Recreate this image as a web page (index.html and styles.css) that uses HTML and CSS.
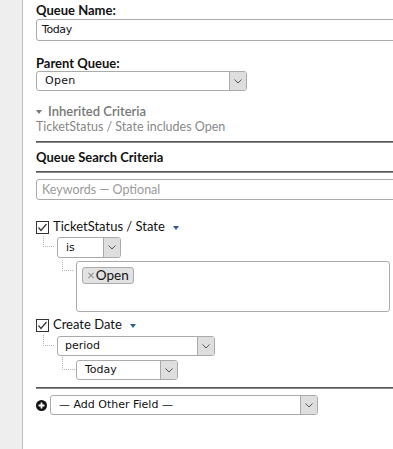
FILE: index.html
```html
<!DOCTYPE html>
<html lang="en">
<head>
<meta charset="utf-8">
<title>Queue</title>
<link rel="stylesheet" href="styles.css">
</head>
<body>
<div class="page">
  <aside class="side"></aside>
  <main class="content">
    <div class="label first">Queue Name:</div>
    <div class="input">Today</div>

    <div class="label parent">Parent Queue:</div>
    <div class="select sel-parent"><span class="val">Open</span><span class="btn"><svg width="8" height="5" viewBox="0 0 8 5"><polyline points="0.5,0.5 4,4 7.5,0.5" fill="none" stroke="#555" stroke-width="1"/></svg></span></div>

    <div class="inh-head"><span class="tri-gray"></span>Inherited Criteria</div>
    <div class="inh-line">TicketStatus / State includes Open</div>

    <div class="rule r1"></div>
    <div class="heading">Queue Search Criteria</div>
    <div class="rule r2"></div>

    <div class="input kw"><span class="ph">Keywords — Optional</span></div>

    <div class="crit c1">
      <div class="crit-head">
        <svg class="cb" width="13" height="13" viewBox="0 0 13 13"><rect x="0.5" y="0.5" width="12" height="12" fill="#fff" stroke="#333"/><polyline points="2.5,6.5 5,9.5 10.5,3" fill="none" stroke="#333" stroke-width="1.2"/></svg>
        <span class="crit-name">TicketStatus / State</span>
        <span class="tri-blue"></span>
      </div>
      <div class="nest n1">
        <div class="select sel-is"><span class="val">is</span><span class="btn"><svg width="8" height="5" viewBox="0 0 8 5"><polyline points="0.5,0.5 4,4 7.5,0.5" fill="none" stroke="#555" stroke-width="1"/></svg></span></div>
        <div class="nest n2">
          <div class="tagbox"><span class="tag"><span class="x">×</span>Open</span></div>
        </div>
      </div>
    </div>

    <div class="crit c2">
      <div class="crit-head">
        <svg class="cb" width="13" height="13" viewBox="0 0 13 13"><rect x="0.5" y="0.5" width="12" height="12" fill="#fff" stroke="#333"/><polyline points="2.5,6.5 5,9.5 10.5,3" fill="none" stroke="#333" stroke-width="1.2"/></svg>
        <span class="crit-name">Create Date</span>
        <span class="tri-blue"></span>
      </div>
      <div class="nest n3">
        <div class="select sel-period"><span class="val">period</span><span class="btn"><svg width="8" height="5" viewBox="0 0 8 5"><polyline points="0.5,0.5 4,4 7.5,0.5" fill="none" stroke="#555" stroke-width="1"/></svg></span></div>
        <div class="nest n4">
          <div class="select sel-today"><span class="val">Today</span><span class="btn"><svg width="8" height="5" viewBox="0 0 8 5"><polyline points="0.5,0.5 4,4 7.5,0.5" fill="none" stroke="#555" stroke-width="1"/></svg></span></div>
        </div>
      </div>
    </div>

    <div class="rule r3"></div>

    <div class="add-row">
      <svg class="plus" width="11" height="11" viewBox="0 0 11 11"><circle cx="5.5" cy="5.5" r="5.5" fill="#111"/><path d="M5.5 2.5v6M2.5 5.5h6" stroke="#fff" stroke-width="1.8"/></svg>
      <div class="select sel-add"><span class="val">— Add Other Field —</span><span class="btn"><svg width="8" height="5" viewBox="0 0 8 5"><polyline points="0.5,0.5 4,4 7.5,0.5" fill="none" stroke="#555" stroke-width="1"/></svg></span></div>
    </div>
  </main>
</div>
</body>
</html>
```
FILE: styles.css
```css
html, body {
  margin: 0;
  padding: 0;
  background: #fff;
  overflow: hidden;
}
body {
  font-family: Lato, "Open Sans", sans-serif;
  color: #111;
}
.page {
  display: flex;
  width: 460px;
  min-height: 449px;
}
.side {
  width: 22px;
  flex: none;
  background: #eeeeee;
  border-right: 1px solid #bdbdbd;
  min-height: 449px;
}
.content {
  width: 400px;
  padding-left: 13px;
  padding-top: 2px;
}
.label {
  font-weight: 700;
  font-size: 13px;
  line-height: 17px;
}
.label.parent {
  margin-top: 14px;
  line-height: 16px;
}
.input {
  box-sizing: border-box;
  height: 22px;
  border: 1px solid #aaa;
  border-radius: 3px;
  padding-left: 5px;
  font-family: "DejaVu Sans", sans-serif;
  font-size: 11px;
  letter-spacing: -0.4px;
  line-height: 20px;
  color: #111;
}
.input.kw {
  height: 21px;
  margin-top: 6px;
  line-height: 19px;
  letter-spacing: 0;
}
.ph {
  font-family: Lato, sans-serif;
  font-size: 12.5px;
  color: #9a9a9a;
}
.select {
  box-sizing: border-box;
  display: flex;
  height: 20px;
  border: 1px solid #aaa;
  border-radius: 3px;
  font-family: "DejaVu Sans", sans-serif;
  font-size: 11px;
  line-height: 18px;
  color: #111;
  overflow: hidden;
}
.select .val {
  flex: 1;
  padding-left: 7px;
  white-space: nowrap;
}
.select .btn {
  flex: none;
  width: 16px;
  background: #dedede;
  border-left: 1px solid #aaa;
  display: flex;
  align-items: center;
  justify-content: center;
}
.sel-parent {
  width: 211px;
}
.sel-parent .val {
  padding-left: 8px;
  letter-spacing: 0.3px;
}
.inh-head {
  margin-top: 13px;
  font-size: 13px;
  line-height: 15px;
  font-weight: 600;
  color: #777;
  display: flex;
  align-items: center;
}
.tri-gray {
  width: 0;
  height: 0;
  border-left: 3.5px solid transparent;
  border-right: 3.5px solid transparent;
  border-top: 4px solid #777;
  margin-right: 6px;
  margin-top: 1px;
}
.inh-line {
  font-size: 12.5px;
  line-height: 15px;
  color: #888;
}
.rule {
  height: 0;
  border-top: 1px solid #555;
  border-bottom: 1px solid #8a8a8a;
}
.r1 {
  margin-top: 7px;
}
.heading {
  margin-top: 6px;
  font-weight: 700;
  font-size: 13px;
  line-height: 16px;
}
.r2 {
  margin-top: 6px;
}
.crit.c1 {
  margin-top: 19px;
}
.crit.c2 {
  margin-top: 5px;
}
.crit-head {
  display: flex;
  align-items: flex-start;
  height: 15px;
}
.cb {
  flex: none;
  margin-top: 2px;
  margin-right: 4px;
}
.crit-name {
  font-size: 13px;
  line-height: 15px;
}
.tri-blue {
  width: 0;
  height: 0;
  border-left: 3.5px solid transparent;
  border-right: 3.5px solid transparent;
  border-top: 4px solid #2d5f94;
  margin-left: 8px;
  margin-top: 7px;
}
.nest {
  position: relative;
}
.nest::before {
  content: "";
  position: absolute;
  left: -14px;
  top: -1px;
  width: 10px;
  height: 10px;
  border-left: 1px dotted #b5b5b5;
  border-bottom: 1px dotted #b5b5b5;
}
.n1 {
  margin-left: 21px;
  margin-top: 3px;
}
.n2 {
  margin-left: 19px;
  margin-top: 3px;
}
.n3 {
  margin-left: 21px;
  margin-top: 4px;
}
.n4 {
  margin-left: 19px;
  margin-top: 4px;
}
.n4::before {
  top: -3px;
  height: 12px;
  width: 12px;
}
.sel-is {
  width: 64px;
  height: 21px;
}
.sel-is .val {
  padding-left: 8px;
  line-height: 19px;
}
.tagbox {
  box-sizing: border-box;
  display: flex;
  align-items: flex-start;
  width: 314px;
  height: 51px;
  border: 1px solid #aaa;
  border-radius: 3px;
  padding: 5px 5px;
}
.tag {
  display: flex;
  align-items: center;
  box-sizing: border-box;
  height: 17px;
  padding: 0 4px 0 4px;
  background: #e2e2e2;
  border: 1px solid #aaa;
  border-radius: 3px;
  font-size: 13.5px;
  line-height: 15px;
  color: #111;
}
.tag .x {
  color: #8a8a8a;
  margin-right: 1px;
}
.sel-period {
  width: 158px;
}
.sel-today {
  width: 102px;
}
.sel-today .val {
  padding-left: 8px;
}
.r3 {
  margin-top: 7px;
}
.add-row {
  margin-top: 6px;
  display: flex;
  align-items: center;
  gap: 3px;
}
.plus {
  flex: none;
}
.sel-add {
  width: 268px;
}
.sel-add .val {
  padding-left: 8px;
}
```
